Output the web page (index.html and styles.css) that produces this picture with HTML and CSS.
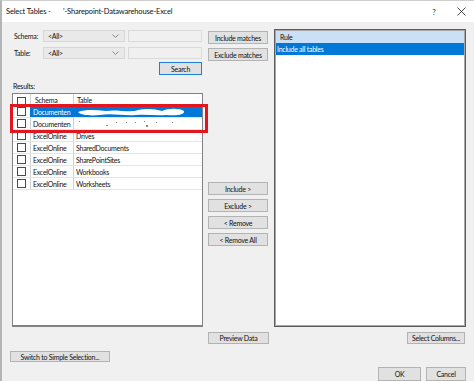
FILE: index.html
```html
<!DOCTYPE html>
<html>
<head>
<meta charset="utf-8">
<link rel="stylesheet" href="styles.css">
</head>
<body>
<div class="window">
  <div class="titlebar">
    <span class="title">Select Tables -&nbsp;&nbsp;&nbsp;&nbsp;&nbsp;&nbsp;&nbsp;'-Sharepoint-Datawarehouse-Excel</span>
    <span class="tb-btn help">?</span>
    <span class="tb-btn close"><svg width="9" height="9" viewBox="0 0 9 9"><path d="M0.5 0.5L8.5 8.5M8.5 0.5L0.5 8.5" stroke="#333" stroke-width="0.9"/></svg></span>
  </div>
  <div class="content">
    <div class="main">
      <div class="filters">
        <div class="frow">
          <span class="flabel">Schema:</span>
          <div class="combo"><span>&lt;All&gt;</span><svg width="7" height="4" viewBox="0 0 7 4"><path d="M0.5 0.5L3.5 3.5L6.5 0.5" fill="none" stroke="#888" stroke-width="1"/></svg></div>
          <div class="tbox"></div>
        </div>
        <div class="frow">
          <span class="flabel">Table:</span>
          <div class="combo"><span>&lt;All&gt;</span><svg width="7" height="4" viewBox="0 0 7 4"><path d="M0.5 0.5L3.5 3.5L6.5 0.5" fill="none" stroke="#888" stroke-width="1"/></svg></div>
          <div class="tbox"></div>
        </div>
        <div class="search-row"><button class="btn search">Search</button></div>
      </div>

      <div class="match-btns">
        <button class="btn">Include matches</button>
        <button class="btn">Exclude matches</button>
      </div>

      <div class="rules">
        <div class="rules-head">Rule</div>
        <div class="rules-row sel">Include all tables</div>
      </div>

      <div class="results-label">Results:</div>

      <div class="tables">
        <div class="trow thead">
          <div class="c-chk"><span class="chk"></span></div>
          <div class="c-schema">Schema</div>
          <div class="c-table">Table</div>
        </div>
        <div class="trow sel">
          <div class="c-chk"><span class="chk"></span></div>
          <div class="c-schema">Documenten</div>
          <div class="c-table"><svg class="redact" width="110" height="10" viewBox="0 0 110 10"><path d="M2 5 C10 2, 20 3, 30 4 C40 2, 55 6, 62 3 C70 1, 80 2, 86 4 C92 1, 104 1, 108 4 C109 8, 100 9, 90 8 C80 9, 70 7, 60 8 C48 9, 36 6, 24 8 C14 9, 4 8, 2 5 Z" fill="#fff"/></svg></div>
        </div>
        <div class="trow">
          <div class="c-chk"><span class="chk"></span></div>
          <div class="c-schema">Documenten</div>
          <div class="c-table"><svg class="redact" width="110" height="10" viewBox="0 0 110 10"><g fill="#8a8a8a"><rect x="3" y="2" width="1" height="1"/><rect x="30" y="6" width="2" height="1"/><rect x="40" y="3" width="1" height="1"/><rect x="50" y="3" width="1" height="1"/><rect x="59" y="3" width="1" height="1"/><rect x="70" y="6" width="2" height="2"/><rect x="80" y="3" width="1" height="1"/><rect x="96" y="3" width="1" height="1"/><rect x="68" y="2" width="1" height="1"/></g></svg></div>
        </div>
        <div class="trow">
          <div class="c-chk"><span class="chk"></span></div>
          <div class="c-schema">ExcelOnline</div>
          <div class="c-table">Drives</div>
        </div>
        <div class="trow">
          <div class="c-chk"><span class="chk"></span></div>
          <div class="c-schema">ExcelOnline</div>
          <div class="c-table">SharedDocuments</div>
        </div>
        <div class="trow">
          <div class="c-chk"><span class="chk"></span></div>
          <div class="c-schema">ExcelOnline</div>
          <div class="c-table">SharePointSites</div>
        </div>
        <div class="trow">
          <div class="c-chk"><span class="chk"></span></div>
          <div class="c-schema">ExcelOnline</div>
          <div class="c-table">Workbooks</div>
        </div>
        <div class="trow">
          <div class="c-chk"><span class="chk"></span></div>
          <div class="c-schema">ExcelOnline</div>
          <div class="c-table">Worksheets</div>
        </div>
        <div class="highlight"></div>
      </div>

      <div class="move-btns">
        <button class="btn">Include &gt;</button>
        <button class="btn">Exclude &gt;</button>
        <button class="btn">&lt; Remove</button>
        <button class="btn">&lt; Remove All</button>
      </div>

      <div class="preview"><button class="btn">Preview Data</button></div>
      <div class="selcols"><button class="btn">Select Columns...</button></div>
    </div>

    <div class="switch-row"><button class="btn switch">Switch to Simple Selection...</button></div>
    <div class="footer">
      <button class="btn ok">OK</button>
      <button class="btn cancel">Cancel</button>
    </div>
  </div>
</div>
</body>
</html>
```

FILE: styles.css
```css
* { box-sizing: border-box; }
html, body {
  margin: 0;
  padding: 0;
  width: 474px;
  height: 381px;
  overflow: hidden;
  background: #f0f0f0;
  font-family: Lato, "Open Sans", "Liberation Sans", sans-serif;
  font-size: 7px;
  letter-spacing: -0.25px;
  color: #111;
}
.window {
  width: 474px;
  height: 381px;
  border-left: 2px solid #b4b4b4;
  border-top: 1px solid #cfcfcf;
  background: #f0f0f0;
}
.titlebar {
  height: 21px;
  background: #fff;
  display: flex;
  align-items: center;
  padding-left: 4px;
}
.title {
  font-size: 7.5px;
  letter-spacing: -0.15px;
  flex: 1;
}
.tb-btn {
  display: flex;
  align-items: center;
  justify-content: center;
  width: 26px;
  height: 21px;
  font-size: 8px;
  color: #333;
}
.help { margin-right: 1px; }

.content {
  padding-left: 10px;
}
.main {
  display: grid;
  grid-template-columns: 191px 60px 193px;
  grid-template-rows: 52px 12px 234px auto;
  column-gap: 5px;
  padding-top: 7px;
}

/* filters */
.filters {
  grid-column: 1;
  grid-row: 1;
  display: flex;
  flex-direction: column;
  padding-top: 1px;
}
.frow {
  display: flex;
  align-items: center;
  height: 12px;
  margin-bottom: 5px;
}
.flabel {
  width: 31px;
  padding-left: 2px;
}
.combo {
  width: 82px;
  height: 12px;
  background: #e9e9e9;
  border: 1px solid #d7d7d7;
  display: flex;
  align-items: center;
  justify-content: space-between;
  padding: 0 5px 0 4px;
}
.tbox {
  width: 74px;
  height: 12px;
  margin-left: 3px;
  background: #f0f0f0;
  border: 1px solid #dadada;
}
.search-row {
  display: flex;
  justify-content: flex-end;
  padding-right: 1px;
  margin-top: -2px;
}

.btn {
  font-family: inherit;
  font-size: 7px;
  letter-spacing: -0.25px;
  color: #111;
  background: #e1e1e1;
  border: 1px solid #b3b3b3;
  padding: 0;
  margin: 0;
  height: 12px;
  line-height: 10px;
  display: flex;
  align-items: center;
  justify-content: center;
  white-space: nowrap;
}
.btn.search {
  width: 43px;
  height: 13px;
  border-color: #1c7fd4;
}

.match-btns {
  grid-column: 2;
  grid-row: 1;
  display: flex;
  flex-direction: column;
  gap: 4px;
  padding-top: 2px;
}
.match-btns .btn { width: 60px; height: 13px; }

.rules {
  grid-column: 3;
  grid-row: 1 / 4;
  margin-left: 1px;
  background: #fff;
  border: 1px solid #5c5c5c;
  box-shadow: inset 0 0 0 1px #a8a8a8;
  padding: 1px;
}
.rules-head {
  height: 12px;
  background: #c9e0f7;
  padding-left: 4px;
  display: flex;
  align-items: center;
}
.rules-row {
  height: 12px;
  display: flex;
  align-items: center;
  padding-left: 1px;
}
.rules-row.sel {
  background: #0078d7;
  color: #fff;
}

.results-label {
  grid-column: 1;
  grid-row: 2;
  padding-left: 1px;
  padding-top: 1px;
}

.tables {
  grid-column: 1;
  grid-row: 3;
  position: relative;
  background: #fff;
  border: 1px solid #828282;
  border-bottom-width: 2px;
}
.trow {
  display: flex;
  height: 12px;
  border-bottom: 1px solid #e4e4e4;
}
.trow > div {
  display: flex;
  align-items: center;
  border-right: 1px solid #d0d0d0;
  overflow: hidden;
  white-space: nowrap;
}
.c-chk {
  width: 18px;
  justify-content: center;
}
.c-schema {
  width: 43px;
  padding-left: 2px;
}
.c-table {
  flex: 1;
  padding-left: 2px;
  border-right: none !important;
}
.thead .c-schema { padding-left: 4px; }
.thead .c-table { padding-left: 3px; }
.thead .chk { margin-top: 3px; }
.chk {
  width: 9px;
  height: 9px;
  border: 1px solid #4a4a4a;
  background: #fff;
  display: block;
}
.trow.sel { background: #0078d7; color: #fff; }
.trow.sel .c-chk { background: #fff; }
.trow.sel > div { border-right-color: #0078d7; }
.redact { display: block; }

.highlight {
  position: absolute;
  left: -3px;
  top: 10px;
  width: 198px;
  height: 29px;
  border: 3px solid #e3151e;
}

.move-btns {
  grid-column: 2;
  grid-row: 2 / 4;
  display: flex;
  flex-direction: column;
  gap: 4px;
  padding-top: 101px;
}
.move-btns .btn { width: 60px; height: 13px; }

.preview {
  grid-column: 2;
  grid-row: 4;
  padding-top: 5px;
}
.preview .btn { width: 61px; height: 12px; }
.selcols {
  grid-column: 3;
  grid-row: 4;
  padding-top: 5px;
  display: flex;
  justify-content: flex-end;
  padding-right: 1px;
}
.selcols .btn { width: 58px; height: 12px; }

.switch-row {
  padding-top: 7px;
}
.btn.switch { width: 100px; height: 11px; margin-left: -2px; }

.footer {
  display: flex;
  justify-content: flex-end;
  gap: 5px;
  padding-right: 8px;
  padding-top: 5px;
}
.btn.ok { width: 43px; height: 14px; }
.btn.cancel { width: 40px; height: 14px; }
```
